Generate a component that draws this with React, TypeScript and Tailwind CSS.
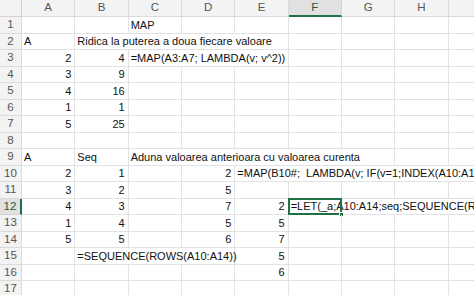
import type { ReactNode } from "react";

type Cell = {
  col: number; // 0 = A
  span?: number;
  text: string;
  align?: "left" | "right";
};

const COLS = ["A", "B", "C", "D", "E", "F", "G", "H", "I"];
const ROW_COUNT = 17;

// cells that hold something; text overflows into the empty cells on its right
const DATA: Record<number, Cell[]> = {
  1: [{ col: 2, text: "MAP" }],
  2: [
    { col: 0, text: "A" },
    { col: 1, span: 4, text: "Ridica la puterea a doua fiecare valoare" },
  ],
  3: [
    { col: 0, text: "2", align: "right" },
    { col: 1, text: "4", align: "right" },
    { col: 2, span: 3, text: "=MAP(A3:A7; LAMBDA(v; v^2))" },
  ],
  4: [
    { col: 0, text: "3", align: "right" },
    { col: 1, text: "9", align: "right" },
  ],
  5: [
    { col: 0, text: "4", align: "right" },
    { col: 1, text: "16", align: "right" },
  ],
  6: [
    { col: 0, text: "1", align: "right" },
    { col: 1, text: "1", align: "right" },
  ],
  7: [
    { col: 0, text: "5", align: "right" },
    { col: 1, text: "25", align: "right" },
  ],
  9: [
    { col: 0, text: "A" },
    { col: 1, text: "Seq" },
    { col: 2, span: 5, text: "Aduna valoarea anterioara cu valoarea curenta" },
  ],
  10: [
    { col: 0, text: "2", align: "right" },
    { col: 1, text: "1", align: "right" },
    { col: 3, text: "2", align: "right" },
    {
      col: 4,
      span: 5,
      text: "=MAP(B10#;  LAMBDA(v; IF(v=1;INDEX(A10:A14;v);INDEX(A10:A14;v)+INDEX(A10:A14;v-1))))",
    },
  ],
  11: [
    { col: 0, text: "3", align: "right" },
    { col: 1, text: "2", align: "right" },
    { col: 3, text: "5", align: "right" },
  ],
  12: [
    { col: 0, text: "4", align: "right" },
    { col: 1, text: "3", align: "right" },
    { col: 3, text: "7", align: "right" },
    { col: 4, text: "2", align: "right" },
    {
      col: 5,
      span: 4,
      text: "=LET(_a;A10:A14;seq;SEQUENCE(ROWS(_a));MAP(seq;LAMBDA(v;IF(v=1;INDEX(_a;v);INDEX(_a;v)+INDEX(_a;v-1)))))",
    },
  ],
  13: [
    { col: 0, text: "1", align: "right" },
    { col: 1, text: "4", align: "right" },
    { col: 3, text: "5", align: "right" },
    { col: 4, text: "5", align: "right" },
  ],
  14: [
    { col: 0, text: "5", align: "right" },
    { col: 1, text: "5", align: "right" },
    { col: 3, text: "6", align: "right" },
    { col: 4, text: "7", align: "right" },
  ],
  15: [
    { col: 1, span: 3, text: "=SEQUENCE(ROWS(A10:A14))" },
    { col: 4, text: "5", align: "right" },
  ],
  16: [{ col: 4, text: "6", align: "right" }],
};

const SPAN: Record<number, string> = {
  1: "col-span-1",
  2: "col-span-2",
  3: "col-span-3",
  4: "col-span-4",
  5: "col-span-5",
};

const SELECTED_COL = 5;
const SELECTED_ROW = 12;

function rowCells(row: number): ReactNode[] {
  const cells = DATA[row] ?? [];
  const out: ReactNode[] = [];
  let c = 0;
  while (c < COLS.length) {
    const cell = cells.find((x) => x.col === c);
    const span = cell?.span ?? 1;
    const isSel = row === SELECTED_ROW && c === SELECTED_COL;
    out.push(
      <div
        key={`${row}-${c}`}
        className={`relative flex items-center whitespace-pre border-b border-r border-[#e2e2e2] px-[2px] pt-[1px] ${
          SPAN[span]
        } ${cell?.align === "right" ? "justify-end pr-[3px]" : "justify-start"} ${
          span > 1 ? "overflow-visible" : "overflow-hidden"
        }`}
      >
        {cell && <span className="leading-[15px]">{cell.text}</span>}
        {isSel && (
          <div className="pointer-events-none absolute left-[-1px] top-[-1px] h-[17.5px] w-[54.3px] border-2 border-[#1e7145]">
            <div className="absolute bottom-[-4px] right-[-4px] h-[5px] w-[5px] border border-white bg-[#1e7145]" />
          </div>
        )}
      </div>,
    );
    c += span;
  }
  return out;
}

export default function App() {
  return (
    <div
      className="h-[295px] w-[474px] overflow-hidden bg-white text-[11px] text-[#111]"
      style={{ fontFamily: '"Liberation Sans", Arial, sans-serif' }}
    >
      <div className="grid grid-cols-[22px_repeat(9,53.33px)] grid-rows-[17px_repeat(17,16.5px)]">
        {/* header row */}
        <div className="border-b border-r border-[#d4d4d4] bg-[#f3f3f3]" />
        {COLS.map((name, i) => (
          <div
            key={name}
            className={`flex items-center justify-center border-r text-[11.5px] ${
              i === SELECTED_COL
                ? "border-b-2 border-b-[#1e7145] border-r-[#d4d4d4] bg-[#e1e1e1] text-[#1e5a3c]"
                : "border-b border-[#dadada] bg-[#f3f3f3] text-[#555]"
            }`}
          >
            {name}
          </div>
        ))}

        {Array.from({ length: ROW_COUNT }, (_, r) => r + 1).map((row) => [
          <div
            key={`h-${row}`}
            className={`flex items-center justify-center border-b text-[11.5px] ${
              row === SELECTED_ROW
                ? "border-r-2 border-r-[#1e7145] border-b-[#d4d4d4] bg-[#e1e1e1] text-[#1e5a3c]"
                : "border-r border-[#dadada] bg-[#f3f3f3] text-[#555]"
            }`}
          >
            {row}
          </div>,
          ...rowCells(row),
        ])}
      </div>
    </div>
  );
}
